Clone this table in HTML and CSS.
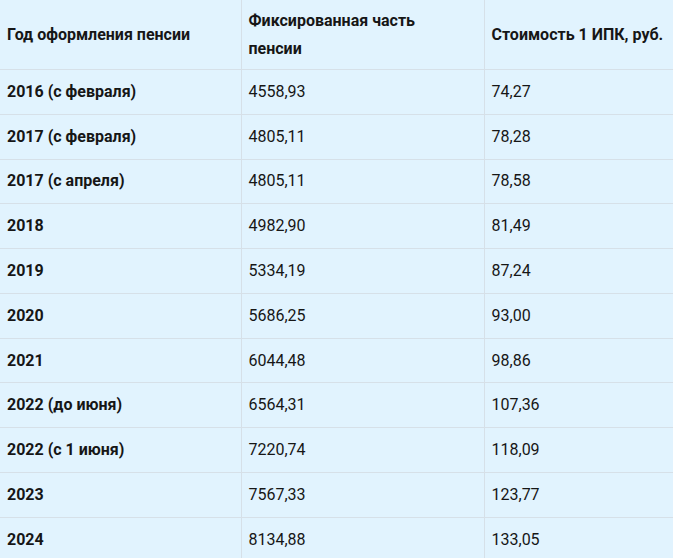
FILE: index.html
```html
<!DOCTYPE html>
<html lang="ru">
<head>
<meta charset="utf-8">
<link rel="stylesheet" href="styles.css">
</head>
<body>
<table class="pension">
  <colgroup>
    <col class="c1"><col class="c2"><col class="c3">
  </colgroup>
  <thead>
    <tr><th>Год оформления пенсии</th><th class="narrow">Фиксированная часть пенсии</th><th>Стоимость 1 ИПК, руб.</th></tr>
  </thead>
  <tbody>
    <tr><td class="year">2016 (с февраля)</td><td>4558,93</td><td>74,27</td></tr>
    <tr><td class="year">2017 (с февраля)</td><td>4805,11</td><td>78,28</td></tr>
    <tr><td class="year">2017 (с апреля)</td><td>4805,11</td><td>78,58</td></tr>
    <tr><td class="year">2018</td><td>4982,90</td><td>81,49</td></tr>
    <tr><td class="year">2019</td><td>5334,19</td><td>87,24</td></tr>
    <tr><td class="year">2020</td><td>5686,25</td><td>93,00</td></tr>
    <tr><td class="year">2021</td><td>6044,48</td><td>98,86</td></tr>
    <tr><td class="year">2022 (до июня)</td><td>6564,31</td><td>107,36</td></tr>
    <tr><td class="year">2022 (с 1 июня)</td><td>7220,74</td><td>118,09</td></tr>
    <tr><td class="year">2023</td><td>7567,33</td><td>123,77</td></tr>
    <tr><td class="year">2024</td><td>8134,88</td><td>133,05</td></tr>
  </tbody>
</table>
</body>
</html>
```
FILE: styles.css
```css
html, body {
  margin: 0;
  padding: 0;
  background: #e1f3fe;
}
.pension {
  width: 673px;
  border-collapse: collapse;
  table-layout: fixed;
  font-family: Roboto, "Liberation Sans", sans-serif;
  font-size: 16px;
  color: #161616;
  background: #e1f3fe;
}
.c1 { width: 241px; }
.c2 { width: 243px; }
.c3 { width: 189px; }
.pension th,
.pension td {
  text-align: left;
  vertical-align: middle;
  line-height: 28px;
  border-left: 1px solid #d6e0e8;
  border-bottom: 1px solid #d6e0e8;
  white-space: nowrap;
}
.pension th:first-child,
.pension td:first-child {
  border-left: none;
}
.pension th {
  font-weight: 700;
  padding: 6.5px 4px 6.5px 7px;
}
.pension th.narrow {
  white-space: normal;
  padding-right: 40px;
}
.pension td {
  font-weight: 400;
  padding: 7.9px 7px 7.9px 7px;
}
.pension td.year {
  font-weight: 700;
}
```
